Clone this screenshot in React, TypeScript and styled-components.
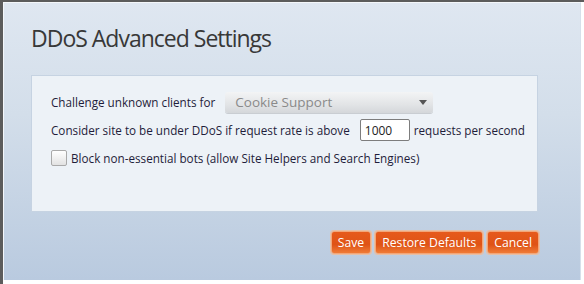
import React from "react";
import styled, { createGlobalStyle } from "styled-components";

const Global = createGlobalStyle`
  html, body { margin: 0; padding: 0; background: #ffffff; }
  body { font-family: "Open Sans", "Noto Sans", sans-serif; }
`;

const Frame = styled.div`
  width: 584px;
  height: 284px;
  box-sizing: border-box;
  border-left: 3px solid #5c5c5c;
  border-top: 2px solid #5c5c5c;
  background: #ffffff;
`;

const Dialog = styled.div`
  width: 578px;
  height: 278px;
  box-sizing: border-box;
  border-top: 1px solid #f4f7fa;
  border-left: 1px solid #f4f7fa;
  border-right: 1px solid #d6e0ea;
  background: linear-gradient(to bottom, #dfe7f1 0%, #d3deea 40%, #b9cadf 100%);
  padding: 18px 0 0 27px;
  display: flex;
  flex-direction: column;
`;

const Title = styled.h1`
  margin: 0;
  font-family: "Open Sans", sans-serif;
  font-weight: 400;
  font-size: 23px;
  line-height: 34px;
  color: #383838;
  letter-spacing: -1px;
`;

const Panel = styled.div`
  margin-top: 20px;
  width: 507px;
  height: 137px;
  box-sizing: border-box;
  background: #edf2f7;
  border: 1px solid #c6d3e2;
  padding: 15px 0 0 19px;
  display: flex;
  flex-direction: column;
  gap: 6px;
`;

const Row = styled.div`
  display: flex;
  align-items: center;
  font-size: 11.7px;
  color: #1f1d3a;
  height: 22px;
`;

const Label = styled.span<{ $gap?: number }>`
  margin-right: ${(p) => p.$gap ?? 0}px;
  white-space: nowrap;
`;

const Select = styled.div`
  width: 208px;
  height: 21px;
  box-sizing: border-box;
  border-radius: 3px;
  background: linear-gradient(to bottom, #f3f4f5 0%, #e2e4e6 60%, #d4d7da 100%);
  box-shadow: 0 1px 0 #c9cdd2;
  display: flex;
  align-items: center;
  justify-content: space-between;
  padding: 0 6px 0 10px;
  font-size: 13.5px;
  color: #8a8a8a;
`;

const Arrow = styled.span`
  width: 0;
  height: 0;
  border-left: 4px solid transparent;
  border-right: 4px solid transparent;
  border-top: 5px solid #555;
`;

const Input = styled.div`
  width: 50px;
  height: 22px;
  box-sizing: border-box;
  border: 1px solid #7d7d7d;
  border-radius: 2px;
  background: #ffffff;
  font-size: 12px;
  color: #222;
  display: flex;
  align-items: center;
  padding-left: 4px;
  margin-right: 4px;
`;

const Checkbox = styled.span`
  width: 16px;
  height: 16px;
  box-sizing: border-box;
  border: 1px solid #a9a9a9;
  border-radius: 2px;
  background: linear-gradient(to bottom, #ffffff, #e2e2e2);
  margin-right: 4px;
`;

const Buttons = styled.div`
  margin-top: 19px;
  width: 508px;
  display: flex;
  justify-content: flex-end;
  gap: 4px;
`;

const Button = styled.button`
  height: 23px;
  box-sizing: border-box;
  padding: 0 6px;
  border: 1px solid #f2a679;
  border-radius: 3px;
  background: linear-gradient(to bottom, #e65a1c 0%, #df5316 60%, #ef7b37 100%);
  box-shadow: 0 0 0 1px #e8bfa5;
  color: #ffffff;
  font-family: "Open Sans", sans-serif;
  font-size: 12.2px;
  cursor: pointer;
`;

export default function App() {
  return (
    <>
      <Global />
      <Frame>
        <Dialog>
          <Title>DDoS Advanced Settings</Title>
          <Panel>
            <Row>
              <Label $gap={10}>Challenge unknown clients for</Label>
              <Select>
                <span>Cookie Support</span>
                <Arrow />
              </Select>
            </Row>
            <Row>
              <Label $gap={10}>Consider site to be under DDoS if request rate is above</Label>
              <Input>1000</Input>
              <Label>requests per second</Label>
            </Row>
            <Row>
              <Checkbox />
              <Label>Block non-essential bots (allow Site Helpers and Search Engines)</Label>
            </Row>
          </Panel>
          <Buttons>
            <Button>Save</Button>
            <Button>Restore Defaults</Button>
            <Button>Cancel</Button>
          </Buttons>
        </Dialog>
      </Frame>
    </>
  );
}
